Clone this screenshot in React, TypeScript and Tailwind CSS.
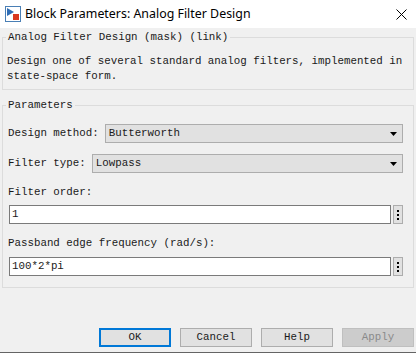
import type { ReactNode } from "react";

const MONO = "font-['Liberation_Mono',monospace] text-[10.8px] text-[#1a1a1a]";

function BlockIcon() {
  return (
    <svg width="16" height="16" viewBox="0 0 16 16">
      <rect x="0.5" y="0.5" width="15" height="15" fill="#fff" stroke="#4a7fb5" />
      <path d="M2 2 L9 6 L2 10 Z" fill="#2f6db5" />
      <rect x="8" y="8" width="6" height="6" fill="#d9381e" />
    </svg>
  );
}

function Group({ title, children, className }: { title: string; children: ReactNode; className?: string }) {
  return (
    <fieldset className={`mx-[2px] border border-[#dcdcdc] ${className ?? ""}`}>
      <legend className={`ml-[3px] px-[2px] leading-[15px] ${MONO}`}>{title}</legend>
      {children}
    </fieldset>
  );
}

function Dropdown({ value }: { value: string }) {
  return (
    <div className="flex-1 h-[19px] flex items-center justify-between bg-[#e1e1e1] border border-[#adadad] pl-[3px] pr-[5px]">
      <span className={MONO}>{value}</span>
      <svg width="7" height="4" viewBox="0 0 7 4">
        <path d="M0 0 H7 L3.5 4 Z" fill="#000" />
      </svg>
    </div>
  );
}

function Field({ value }: { value: string }) {
  return (
    <div className="flex items-center gap-[2px]">
      <div className="flex-1 h-[19px] flex items-center bg-white border border-[#7a7a7a] pl-[2px]">
        <span className={MONO}>{value}</span>
      </div>
      <div className="w-[10px] h-[19px] flex flex-col items-center justify-center gap-[2px] bg-[#e1e1e1] border border-[#adadad]">
        <span className="w-[2px] h-[2px] bg-black" />
        <span className="w-[2px] h-[2px] bg-black" />
        <span className="w-[2px] h-[2px] bg-black" />
      </div>
    </div>
  );
}

function Button({ label, kind }: { label: string; kind?: "default" | "disabled" }) {
  const look =
    kind === "default"
      ? "border-2 border-[#0078d7] bg-[#e1e1e1]"
      : kind === "disabled"
      ? "border border-[#bfbfbf] bg-[#cccccc] !text-[#8a8a8a]"
      : "border border-[#adadad] bg-[#e1e1e1]";
  return (
    <div className={`w-[72px] h-[19px] flex items-center justify-center ${look} ${MONO}`}>{label}</div>
  );
}

export default function App() {
  return (
    <div className="w-[416px] h-[353px] flex flex-col overflow-hidden bg-[#f0f0f0]">
      <div className="h-[28px] bg-white flex items-center pl-[5px] pr-[9px]">
        <BlockIcon />
        <span className="ml-[4px] flex-1 font-['Noto_Sans',sans-serif] text-[12.4px] text-black">
          Block Parameters: Analog Filter Design
        </span>
        <svg width="11" height="11" viewBox="0 0 11 11">
          <path d="M0.5 0.5 L10.5 10.5 M10.5 0.5 L0.5 10.5" stroke="#000" strokeWidth="1" />
        </svg>
      </div>

      <Group title="Analog Filter Design (mask) (link)" className="mt-[2px] h-[60px]">
        <p className={`px-[4px] pt-[9px] leading-[15px] whitespace-nowrap ${MONO}`}>
          Design one of several standard analog filters, implemented in
          <br />
          state-space form.
        </p>
      </Group>

      <Group title="Parameters" className="mt-[8px] h-[190px]">
        <div className="pl-[5px] pr-[10px] pt-[11px] flex flex-col">
          <div className="flex items-center gap-[6px]">
            <span className={MONO}>Design method:</span>
            <Dropdown value="Butterworth" />
          </div>
          <div className="mt-[11px] flex items-center gap-[6px]">
            <span className={MONO}>Filter type:</span>
            <Dropdown value="Lowpass" />
          </div>
          <div className={`mt-[12px] leading-[15px] ${MONO}`}>Filter order:</div>
          <div className="mt-[5px] pl-[1px]">
            <Field value="1" />
          </div>
          <div className={`mt-[12px] leading-[15px] ${MONO}`}>Passband edge frequency (rad/s):</div>
          <div className="mt-[6px] pl-[1px]">
            <Field value="100*2*pi" />
          </div>
        </div>
      </Group>

      <div className="flex-1" />
      <div className="flex justify-end gap-[9px] pr-[2px] pb-[5px]">
        <Button label="OK" kind="default" />
        <Button label="Cancel" />
        <Button label="Help" />
        <Button label="Apply" kind="disabled" />
      </div>
      <div className="h-[1px] bg-[#646464]" />
    </div>
  );
}
